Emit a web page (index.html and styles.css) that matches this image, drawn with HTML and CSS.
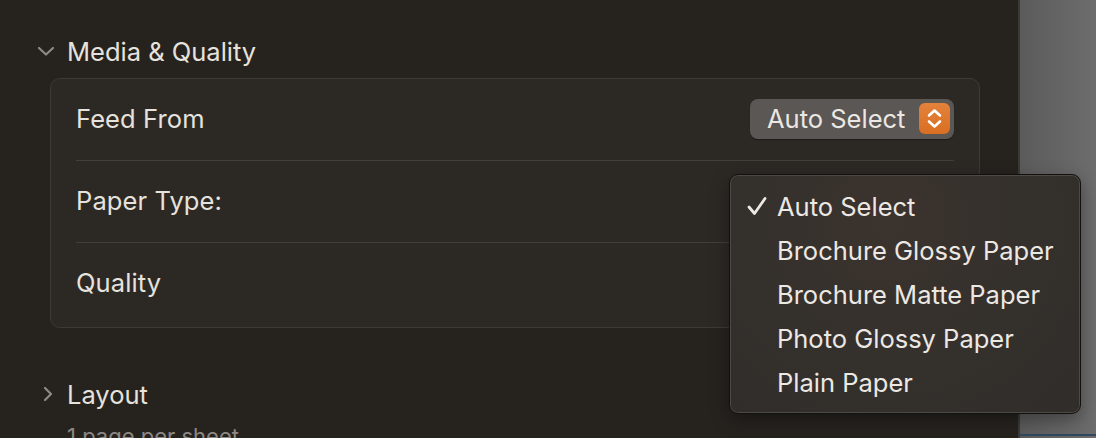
FILE: index.html
```html
<!DOCTYPE html>
<html>
<head>
<meta charset="utf-8">
<link rel="stylesheet" href="styles.css">
</head>
<body>
<div class="window">
  <main class="panel">
    <section class="group">
      <div class="group-head">
        <svg class="chev" width="18" height="12" viewBox="0 0 18 12"><path d="M2 3 L9 9.5 L16 3" fill="none" stroke="#8e8a85" stroke-width="2.2" stroke-linecap="round" stroke-linejoin="round"/></svg>
        <span class="group-title">Media &amp; Quality</span>
      </div>
      <div class="card">
        <div class="row">
          <span class="label">Feed From</span>
          <div class="popup">
            <span class="popup-text">Auto Select</span>
            <span class="stepper">
              <svg width="31" height="31" viewBox="0 0 31 31"><path d="M10 12.5 L15.5 7.5 L21 12.5 M10 18.5 L15.5 23.5 L21 18.5" fill="none" stroke="#fff" stroke-width="2.6" stroke-linecap="round" stroke-linejoin="round"/></svg>
            </span>
          </div>
        </div>
        <div class="row">
          <span class="label">Paper Type:</span>
        </div>
        <div class="row row-last">
          <span class="label">Quality</span>
        </div>
      </div>
    </section>
    <section class="group group-layout">
      <div class="group-head">
        <svg class="chev chev-right" width="18" height="18" viewBox="0 0 18 18"><path d="M6 3 L12 9 L6 15" fill="none" stroke="#8e8a85" stroke-width="2.2" stroke-linecap="round" stroke-linejoin="round"/></svg>
        <span class="group-title">Layout</span>
      </div>
      <div class="group-sub">1 page per sheet</div>
    </section>
  </main>
  <div class="divider"></div>
  <aside class="side"><div class="side-line"></div></aside>
</div>
<div class="menu">
  <div class="menu-item checked"><svg class="check" width="22" height="22" viewBox="0 0 22 22"><path d="M3 12 L8.5 18.5 L19 3.5" fill="none" stroke="#ece8e4" stroke-width="2.8" stroke-linecap="round" stroke-linejoin="round"/></svg>Auto Select</div>
  <div class="menu-item">Brochure Glossy Paper</div>
  <div class="menu-item">Brochure Matte Paper</div>
  <div class="menu-item">Photo Glossy Paper</div>
  <div class="menu-item">Plain Paper</div>
</div>
</body>
</html>
```
FILE: styles.css
```css
* { box-sizing: border-box; }
html, body { margin: 0; padding: 0; }
body {
  width: 1096px;
  height: 438px;
  overflow: hidden;
  background: #26231f;
  font-family: Inter, "Noto Sans", sans-serif;
  color: #e6e2de;
  position: relative;
}
.window {
  display: flex;
  height: 438px;
}
.panel {
  width: 1018px;
  background: #26231f;
  padding: 34px 0 0 37px;
  display: flex;
  flex-direction: column;
}
.divider {
  width: 2px;
  background: #3c3a37;
}
.side {
  flex: 1;
  background: linear-gradient(90deg, #5b5b5b 0%, #6d6d6d 100%);
  display: flex;
  flex-direction: column;
  justify-content: flex-end;
}
.side-line {
  height: 2px;
  margin-bottom: 2px;
  background: #2f4860;
}
.group-head {
  display: flex;
  align-items: center;
  height: 34px;
}
.chev { width: 18px; flex: none; }
.chev-right { margin-left: 2px; margin-right: -2px; }
.group-title {
  margin-left: 12px;
  font-size: 25.5px;
  font-weight: 420;
  color: #e6e2de;
}
.card {
  margin: 10px 0 0 13px;
  width: 930px;
  border: 1px solid #3d3a36;
  border-radius: 10px;
  background: #2c2925;
  padding: 0 25px;
}
.row {
  height: 82px;
  display: flex;
  align-items: center;
  justify-content: space-between;
  border-top: 1px solid #423f3b;
  padding-bottom: 2px;
}
.row:first-child { border-top: none; height: 81px; }
.row-last { height: 85px; padding-bottom: 6px; }
.label {
  font-size: 25.5px;
  color: #e6e2de;
  letter-spacing: 0.1px;
}
.popup {
  display: flex;
  align-items: center;
  height: 40px;
  width: 204px;
  border-radius: 8px;
  background: #5b5754;
  box-shadow: 0 1px 1px rgba(0,0,0,0.35);
  padding: 0 4px 0 17px;
  justify-content: space-between;
}
.popup-text {
  font-size: 25.5px;
  color: #ebe7e3;
}
.stepper {
  width: 31px;
  height: 31px;
  border-radius: 6px;
  background: linear-gradient(180deg, #e3823a 0%, #d96f22 100%);
  display: flex;
}
.group-layout { margin-top: 49px; }
.group-sub {
  margin-left: 30px;
  margin-top: 12px;
  font-size: 22px;
  color: #8d8883;
}
.menu {
  position: absolute;
  left: 729px;
  top: 174px;
  width: 352px;
  height: 240px;
  border-radius: 9px;
  border: 1px solid #121110;
  box-shadow: inset 0 0 0 1px #4d4945, 0 6px 18px rgba(0,0,0,0.35);
  background: radial-gradient(ellipse at 45% 20%, #3b332e 0%, #34302c 55%, #302d2a 100%);
  padding: 9px 0 0 0;
}
.menu-item {
  height: 44px;
  display: flex;
  align-items: center;
  padding-left: 47px;
  font-size: 25.5px;
  color: #ece8e4;
  position: relative;
}
.check {
  position: absolute;
  left: 16px;
  top: 11px;
}
```
